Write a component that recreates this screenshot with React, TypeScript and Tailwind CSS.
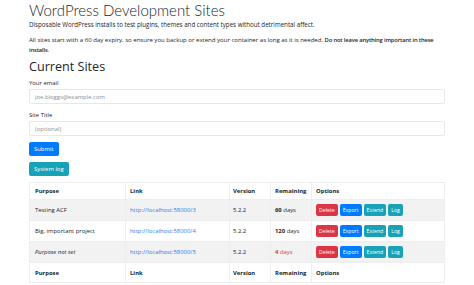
import React from "react";

interface Site {
    purpose: string;
    link: string;
    version: string;
    days: number;
    unset?: boolean;
}

const sites: Site[] = [
    { purpose: "Testing ACF", link: "http://localhost:58000/3", version: "5.2.2", days: 60 },
    { purpose: "Big, important project", link: "http://localhost:58000/4", version: "5.2.2", days: 120 },
    { purpose: "Purpose not set", link: "http://localhost:58000/5", version: "5.2.2", days: 4, unset: true },
];

const HeadRow = ({ top }: { top?: boolean }) => (
    <tr className={top ? "h-[17px]" : "h-[20px]"}>
        <th className="border border-[#eceef0] px-[5px] text-left font-bold w-[96px]">Purpose</th>
        <th className="border border-[#eceef0] px-[4px] text-left font-bold w-[104px]">Link</th>
        <th className="border border-[#eceef0] px-[3px] text-left font-bold w-[41px]">Version</th>
        <th className="border border-[#eceef0] px-[4px] text-left font-bold w-[41px]">Remaining</th>
        <th className="border border-[#eceef0] px-[4px] text-left font-bold">Options</th>
    </tr>
);

const SmallBtn = ({ label, color }: { label: string; color: string }) => (
    <span className={`inline-flex items-center justify-center h-[12px] px-[3px] rounded-[2px] text-white text-[5.2px] ${color}`}>
        {label}
    </span>
);

const App = () => {
    return (
        <div className="w-[474px] h-[285px] overflow-hidden bg-white text-[#212529]" style={{ fontFamily: "'Open Sans', 'Noto Sans', sans-serif" }}>
            <div className="mx-auto w-[416px]">
                <h1 className="text-[15px] leading-[20px] font-light" style={{ fontFamily: "Lato, 'Open Sans', sans-serif" }}>
                    WordPress Development Sites
                </h1>
                <p className="text-[6.2px] leading-[10px]">
                    Disposable WordPress installs to test plugins, themes and content types without detrimental affect.
                </p>
                <p className="text-[6.1px] leading-[10px] mt-[5px] tracking-[-0.03px]">
                    All sites start with a 60 day expiry, so ensure you backup or extend your container as long as it is needed.{" "}
                    <span className="font-semibold text-[5.8px] tracking-[-0.15px]">Do not leave anything important in these installs</span>.
                </p>
                <h2 className="text-[12.6px] leading-[15px] font-normal mt-[4px]">Current Sites</h2>

                <div className="text-[5.9px] leading-[10px] mt-[4px]">Your email</div>
                <input
                    className="block w-full h-[15px] mt-[1px] border border-[#e6e8eb] rounded-[2px] px-[5px] text-[5.9px] placeholder:text-[#8a9096] outline-none"
                    placeholder="joe.bloggs@example.com"
                />
                <div className="text-[5.9px] leading-[10px] mt-[6px]">Site Title</div>
                <input
                    className="block w-full h-[15px] mt-[1px] border border-[#e6e8eb] rounded-[2px] px-[5px] text-[5.9px] placeholder:text-[#8a9096] outline-none"
                    placeholder="(optional)"
                />

                <button className="flex items-center h-[14px] mt-[6px] px-[5px] rounded-[2px] bg-[#007bff] text-white text-[5.9px]">Submit</button>
                <button className="flex items-center h-[14px] mt-[6px] px-[5px] rounded-[2px] bg-[#17a2b8] text-white text-[5.9px]">System log</button>

                <table className="w-full mt-[6px] border-collapse text-[5.9px] leading-[10px]">
                    <thead>
                        <HeadRow top />
                    </thead>
                    <tbody>
                        {sites.map((s, i) => (
                            <tr key={s.link} className={`h-[21px] ${i % 2 === 0 ? "bg-[#f2f2f2]" : "bg-white"}`}>
                                <td className={`border border-[#eceef0] px-[5px] ${s.unset ? "italic" : ""}`}>{s.purpose}</td>
                                <td className="border border-[#eceef0] px-[4px] text-[#1f7ff0]">{s.link}</td>
                                <td className="border border-[#eceef0] px-[3px]">{s.version}</td>
                                <td className={`border border-[#eceef0] px-[4px] ${s.days < 10 ? "text-[#dc3545]" : ""}`}>
                                    <b>{s.days}</b> days
                                </td>
                                <td className="border border-[#eceef0] px-[4px]">
                                    <div className="flex gap-[2px]">
                                        <SmallBtn label="Delete" color="bg-[#dc3545]" />
                                        <SmallBtn label="Export" color="bg-[#007bff]" />
                                        <SmallBtn label="Extend" color="bg-[#17a2b8]" />
                                        <SmallBtn label="Log" color="bg-[#17a2b8]" />
                                    </div>
                                </td>
                            </tr>
                        ))}
                    </tbody>
                    <tfoot>
                        <HeadRow />
                    </tfoot>
                </table>
            </div>
        </div>
    );
};

export default App;
